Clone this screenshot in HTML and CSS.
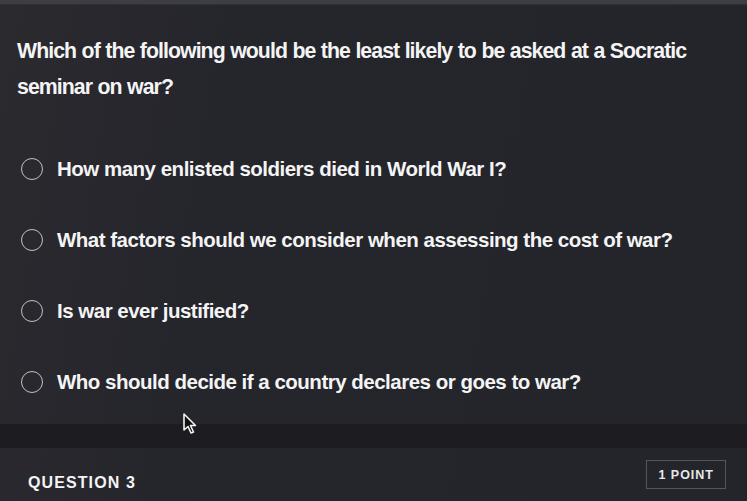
FILE: index.html
```html
<!DOCTYPE html>
<html>
<head>
<meta charset="utf-8">
<link rel="stylesheet" href="styles.css">
</head>
<body>
<div class="screen">
  <div class="topline"></div>
  <div class="card">
    <p class="question">Which of the following would be the least likely to be asked at a Socratic seminar on war?</p>
    <ul class="options">
      <li class="option"><span class="radio"></span><span class="label">How many enlisted soldiers died in World War I?</span></li>
      <li class="option"><span class="radio"></span><span class="label">What factors should we consider when assessing the cost of war?</span></li>
      <li class="option"><span class="radio"></span><span class="label">Is war ever justified?</span></li>
      <li class="option"><span class="radio"></span><span class="label">Who should decide if a country declares or goes to war?</span></li>
    </ul>
  </div>
  <div class="divider"></div>
  <div class="next">
    <span class="qnum">QUESTION 3</span>
    <span class="points">1 POINT</span>
  </div>
  <svg class="cursor" width="14" height="22" viewBox="0 0 14 22">
    <path d="M1 1 L1 17 L5 13.5 L8 20 L10.5 19 L7.5 12.5 L12.5 12.5 Z" fill="#111" stroke="#f2f2f2" stroke-width="1.6" stroke-linejoin="round"/>
  </svg>
</div>
</body>
</html>
```
FILE: styles.css
```css
html, body {
  margin: 0;
  padding: 0;
  background: #25252b;
}
.screen {
  position: relative;
  width: 747px;
  height: 501px;
  overflow: hidden;
  background: linear-gradient(100deg, #2a2a2f 0%, #25252c 30%, #24242b 100%);
  font-family: "Liberation Sans", Arial, sans-serif;
  color: #f4f4f4;
}
.topline {
  height: 4px;
  background: #3d3d44;
  border-bottom: 1px solid #2f2f36;
}
.card {
  padding: 28px 30px 0 17px;
}
.question {
  margin: 0;
  font-size: 21.3px;
  font-weight: bold;
  line-height: 36px;
  letter-spacing: -0.95px;
  word-spacing: 0.5px;
}
.options {
  list-style: none;
  margin: 0;
  padding: 52px 0 0 4px;
  display: flex;
  flex-direction: column;
  gap: 47px;
}
.option {
  display: flex;
  align-items: center;
  gap: 14px;
  height: 24px;
}
.radio {
  width: 20px;
  height: 20px;
  border: 1.6px solid #c2c2c6;
  border-radius: 50%;
  flex: none;
}
.label {
  font-size: 20.5px;
  font-weight: bold;
  letter-spacing: -0.5px;
}
.divider {
  margin-top: 30px;
  height: 24px;
  background: #1c1c21;
}
.next {
  display: flex;
  justify-content: space-between;
  align-items: flex-end;
  padding: 12px 21px 0 28px;
}
.qnum {
  font-size: 16px;
  font-weight: bold;
  letter-spacing: 1.1px;
  padding-bottom: 8px;
}
.points {
  border: 1px solid #55555d;
  padding: 7px 11px 6px 11px;
  font-size: 12.5px;
  font-weight: bold;
  letter-spacing: 1px;
  color: #e8e8ea;
  margin-bottom: 11px;
}
.cursor {
  position: absolute;
  left: 183px;
  top: 413px;
}
```
